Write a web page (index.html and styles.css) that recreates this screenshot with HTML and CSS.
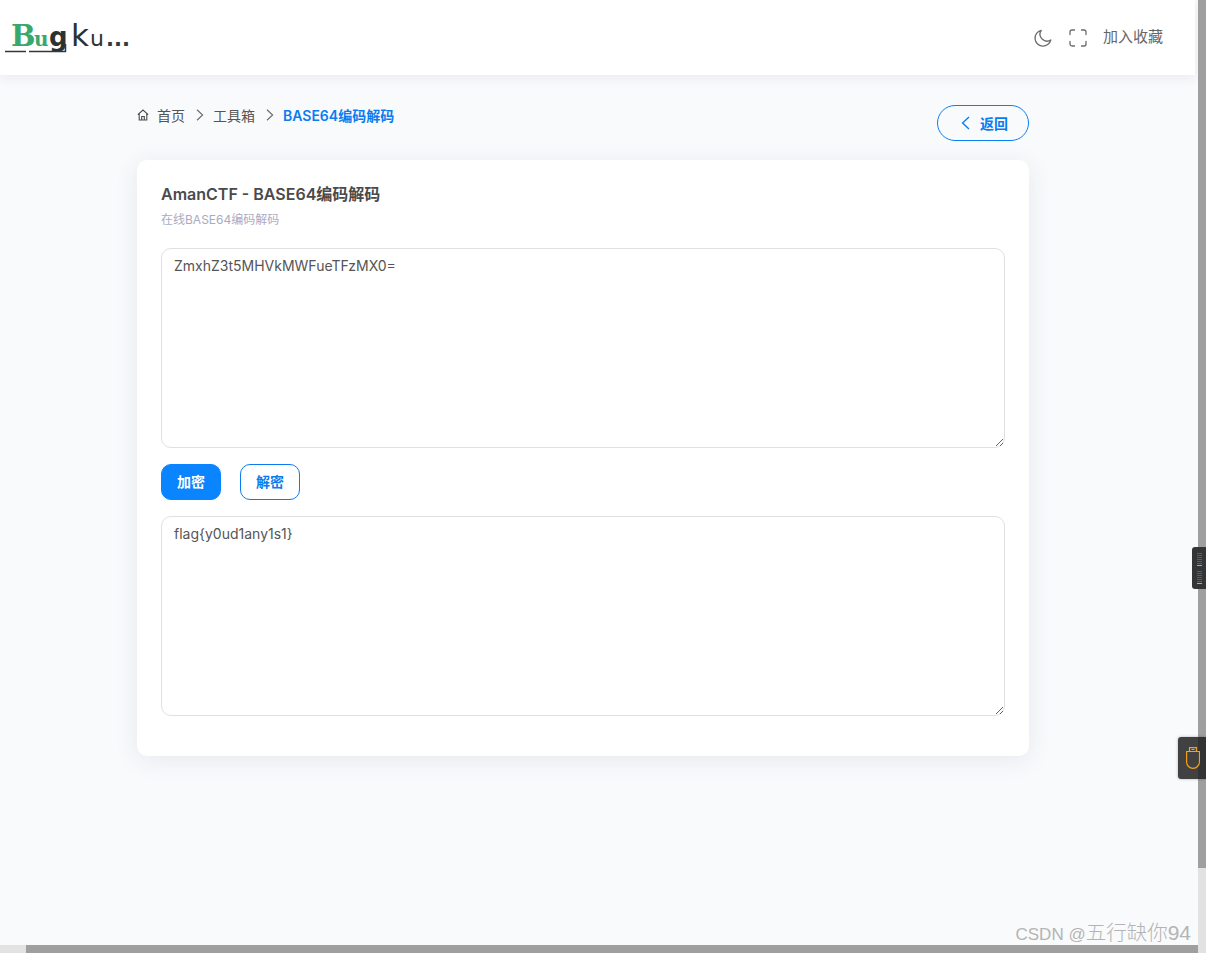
FILE: index.html
```html
<!DOCTYPE html>
<html lang="zh-CN">
<head>
<meta charset="utf-8">
<title>BASE64编码解码</title>
<link rel="stylesheet" href="styles.css">
</head>
<body>
<div class="window">
  <div class="viewport">
    <header class="topbar">
      <a class="logo">
        <span class="logo-b">B</span><span class="logo-u">u</span><span class="logo-g">g</span><span class="logo-k">k</span><span class="logo-v">u</span><span class="logo-dots">...</span>
        <svg class="logo-line" width="64" height="32" viewBox="0 0 64 32"><path d="M0 29.500H21M24 29.500H60.500V22" fill="none" stroke="#33383a" stroke-width="1.500"/></svg>
      </a>
      <div class="top-actions">
        <svg class="top-icon" width="18" height="18" viewBox="0 0 18 18"><path d="M7.200 1.300A8 8 0 1 0 16.800 11 7 7 0 0 1 7.200 1.300Z" fill="none" stroke="#6b6b6b" stroke-width="1.300" stroke-linejoin="round"/></svg>
        <svg class="top-icon" width="18" height="18" viewBox="0 0 18 18"><path d="M1 5.500V3a2 2 0 0 1 2-2h2.500M12.500 1H15a2 2 0 0 1 2 2v2.500M17 12.500V15a2 2 0 0 1-2 2h-2.500M5.500 17H3a2 2 0 0 1-2-2v-2.500" fill="none" stroke="#6b6b6b" stroke-width="1.300" stroke-linecap="round"/></svg>
        <span class="fav">加入收藏</span>
      </div>
    </header>
    <main class="content">
      <div class="crumb-row">
        <nav class="crumbs">
          <svg class="home" width="12" height="12" viewBox="0 0 12 12"><path d="M.8 5.600 6 1l5.200 4.600M2.200 4.600V11h7.600V4.600M4.700 11V7.500h2.600V11" fill="none" stroke="#4a4a4a" stroke-width="1.100"/></svg>
          <span class="crumb-home">首页</span>
          <svg class="sep" width="8" height="12" viewBox="0 0 8 12"><path d="M1 .8 6.600 6 1 11.200" fill="none" stroke="#6f6f6f" stroke-width="1.200"/></svg>
          <span>工具箱</span>
          <svg class="sep" width="8" height="12" viewBox="0 0 8 12"><path d="M1 .8 6.600 6 1 11.200" fill="none" stroke="#6f6f6f" stroke-width="1.200"/></svg>
          <strong class="crumb-now">BASE64编码解码</strong>
        </nav>
        <a class="back">
          <svg width="9" height="14" viewBox="0 0 9 14"><path d="M8 1 1.600 7 8 13" fill="none" stroke="#0a7cf0" stroke-width="1.400"/></svg>
          <span>返回</span>
        </a>
      </div>
      <section class="card">
        <h1 class="title">AmanCTF - BASE64编码解码</h1>
        <p class="sub">在线BASE64编码解码</p>
        <textarea class="box" spellcheck="false">ZmxhZ3t5MHVkMWFueTFzMX0=</textarea>
        <div class="btns">
          <button class="btn btn-solid">加密</button>
          <button class="btn btn-line">解密</button>
        </div>
        <textarea class="box" spellcheck="false">flag{y0ud1any1s1}</textarea>
      </section>
    </main>
    <div class="watermark">CSDN @<span class="wm-name">五行缺你</span><span class="wm-num">94</span></div>
  </div>
  <div class="vbar"><div class="vthumb"></div></div>
  <div class="hbar"><div class="hthumb"></div></div>
  <div class="corner"></div>
  <div class="meter">
    <div class="ticks"><i></i><i></i><i></i><i></i><i></i><i></i><i class="orange"></i></div>
    <div class="ticks"><i></i><i></i><i></i><i></i><i></i><i></i><i class="green"></i></div>
  </div>
  <div class="usb">
    <svg width="14" height="22" viewBox="0 0 14 22"><path d="M3.500 4.500V.6h7v3.900M5.500 2.500h3M.6 4.500h12.800v10.500a6.400 6.400 0 0 1-12.800 0Z" fill="none" stroke="#f2a01e" stroke-width="1.200"/></svg>
  </div>
</div>
</body>
</html>
```
FILE: styles.css
```css
* { box-sizing: border-box; }
html, body { margin: 0; height: 100%; overflow: hidden; }
body { font-family: Inter, "Noto Sans CJK SC", sans-serif; color: #4a4a4a; background: #f9fafc; }

.window {
  position: relative;
  display: grid;
  grid-template-columns: 1198px 8px;
  grid-template-rows: 945px 8px;
  width: 1206px;
  height: 953px;
}
.viewport { position: relative; overflow: hidden; background: #f9fafc; }

.topbar {
  display: flex;
  align-items: center;
  justify-content: space-between;
  width: 1195px;
  height: 75px;
  background: #fff;
  box-shadow: 0 2px 12px rgba(40, 50, 80, .09);
}
.logo {
  position: relative;
  display: flex;
  align-items: baseline;
  height: 40px;
  margin: -5px 0 0 11px;
  font-family: "DejaVu Sans", sans-serif;
  line-height: 40px;
}
.logo-b { width: 23px; color: #3aa76d; font-family: "DejaVu Serif", serif; font-size: 29px; font-weight: 700; }
.logo-u { width: 15px; color: #3aa76d; font-family: "DejaVu Serif", serif; font-size: 20px; font-weight: 700; }
.logo-g { width: 22px; color: #2c3234; font-size: 26px; font-weight: 700; }
.logo-k { width: 19px; color: #2c3234; font-size: 31px; font-weight: 400; }
.logo-v { width: 16px; color: #2c3234; font-size: 22px; }
.logo-dots { color: #34383c; font-size: 21px; font-weight: 700; }
.logo-line { position: absolute; left: -6px; top: 7px; }

.top-actions { display: flex; align-items: center; gap: 17px; margin-right: 32px; }
.top-icon { display: block; }
.fav { margin: 0 0 2px -1px; font-size: 15px; line-height: 20px; color: #666; }

.content { width: 892px; margin-left: 137px; }
.crumb-row { display: flex; justify-content: space-between; align-items: flex-start; height: 85px; padding-top: 30px; }
.crumbs { display: flex; align-items: center; height: 20px; font-size: 14px; color: #555; }
.home { margin-right: 8px; }
.sep { margin: 0 9px 0 11px; }
.crumb-now { color: #0a7cf0; font-weight: 600; }
.back {
  display: flex;
  align-items: center;
  justify-content: center;
  gap: 10px;
  width: 92px;
  height: 36px;
  padding: 0 0 1px 3px;
  border: 1px solid #0a80f5;
  border-radius: 18px;
  color: #0a7cf0;
  font-size: 14px;
  font-weight: 600;
}

.card {
  display: flex;
  flex-direction: column;
  height: 596px;
  padding: 24px 24px 40px;
  background: #fff;
  border-radius: 10px;
  box-shadow: 0 4px 24px rgba(40, 50, 80, .09);
}
.title { margin: 0; font-size: 16px; line-height: 20px; font-weight: 600; color: #4a4a4a; }
.sub { margin: 7px 0 19px; font-size: 12px; line-height: 18px; color: #aaaac4; }
.box {
  display: block;
  width: 100%;
  height: 200px;
  flex: none;
  padding: 8px 12px;
  border: 1px solid #e0e0e0;
  border-radius: 10px;
  outline: none;
  resize: vertical;
  font-family: inherit;
  font-size: 14px;
  line-height: 18px;
  color: #555;
  background: #fff;
}
.btns { display: flex; gap: 19px; margin: 16px 0; }
.btn {
  width: 60px;
  height: 36px;
  padding: 0 0 2px;
  border-radius: 10px;
  font-family: inherit;
  font-size: 14px;
  font-weight: 600;
}
.btn-solid { background: #0a84ff; border: 1px solid #0a84ff; color: #fff; }
.btn-line { background: #fff; border: 1px solid #0a7cf0; color: #0a7cf0; }

.watermark {
  position: absolute;
  right: 7px;
  bottom: -2px;
  font-family: "Liberation Sans", "Noto Sans CJK SC", sans-serif;
  font-size: 17px;
  line-height: 24px;
  color: #b4b4b4;
}
.wm-name { font-size: 20.500px; font-weight: 300; }
.wm-num { font-size: 21px; }

.vbar { background: #e2e2e2; }
.vthumb { height: 868px; background: #9f9f9f; }
.hbar { background: #e2e2e2; padding-left: 26px; }
.hthumb { height: 8px; background: #9f9f9f; }
.corner { background: #e2e2e2; }

.meter {
  position: absolute;
  left: 1192px;
  top: 547px;
  display: flex;
  flex-direction: column;
  gap: 4px;
  width: 14px;
  height: 42px;
  padding: 6px 0 0 5px;
  background: #333536;
  border-radius: 3px 0 0 3px;
}
.ticks { display: flex; flex-direction: column; width: 5px; }
.ticks i { display: block; height: 1px; margin-bottom: 1px; background: #5c5e5f; }
.ticks .orange { background: #e8a22e; }
.ticks .green { background: #8fd23a; }

.usb {
  position: absolute;
  left: 1178px;
  top: 737px;
  display: flex;
  align-items: center;
  justify-content: center;
  width: 28px;
  height: 42px;
  padding-left: 2px;
  background: linear-gradient(90deg, #414141 20px, #333 20px);
  border-radius: 3px 0 0 3px;
  box-shadow: 0 0 3px rgba(0, 0, 0, .3);
}
```
